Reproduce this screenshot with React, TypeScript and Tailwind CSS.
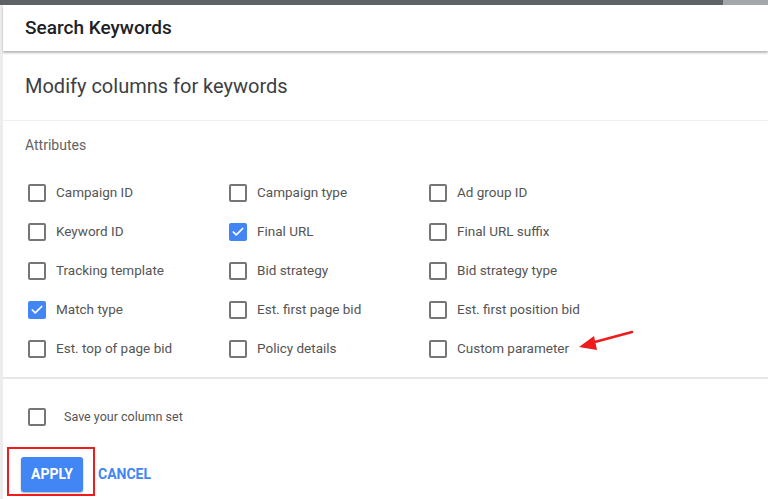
import { Check } from 'lucide-react';

type Attr = { label: string; checked?: boolean };

const attributes: Attr[] = [
  { label: 'Campaign ID' },
  { label: 'Campaign type' },
  { label: 'Ad group ID' },
  { label: 'Keyword ID' },
  { label: 'Final URL', checked: true },
  { label: 'Final URL suffix' },
  { label: 'Tracking template' },
  { label: 'Bid strategy' },
  { label: 'Bid strategy type' },
  { label: 'Match type', checked: true },
  { label: 'Est. first page bid' },
  { label: 'Est. first position bid' },
  { label: 'Est. top of page bid' },
  { label: 'Policy details' },
  { label: 'Custom parameter' },
];

function Box({ checked = false }: { checked?: boolean }) {
  return checked ? (
    <span className="flex h-[18px] w-[18px] flex-shrink-0 items-center justify-center rounded-[2px] bg-[#4285f4]">
      <Check size={14} strokeWidth={3} className="text-white" />
    </span>
  ) : (
    <span className="h-[18px] w-[18px] flex-shrink-0 rounded-[2px] border-2 border-[#767676]" />
  );
}

export default function App() {
  return (
    <div
      className="relative h-[499px] w-[768px] overflow-hidden bg-white"
      style={{ fontFamily: 'Roboto, "Liberation Sans", sans-serif' }}
    >
      {/* Top strip */}
      <div className="flex h-[5px]">
        <div className="flex-1 bg-[#5f6368]" />
        <div className="w-[45px] bg-[#a3a6aa]" />
      </div>

      <div className="flex h-[494px]">
        <div className="w-[3px] bg-[#ececec]" />

        <div className="flex flex-1 flex-col">
          {/* Header */}
          <div className="relative z-10 flex h-[46px] items-center pl-[22px] pt-[1px] text-[19px] font-medium text-[#202124] shadow-[0_2px_2px_rgba(0,0,0,0.28)]">
            Search Keywords
          </div>

          {/* Title */}
          <div className="flex h-[70px] items-center border-b border-[#efefef] pl-[22px] text-[20px] text-[#3c4043]">
            Modify columns for keywords
          </div>

          {/* Attributes */}
          <div className="border-b-2 border-[#e6e6e6] pb-[9px] pl-[25px]">
            <div className="-ml-[3px] h-[52px] pt-[14px] text-[14px] leading-[20px] text-[#5f6368]">Attributes</div>
            <div className="grid grid-cols-[201px_200px_1fr]">
              {attributes.map((a) => (
                <div key={a.label} className="flex h-[39px] items-center gap-[10px]">
                  <Box checked={a.checked} />
                  <span className="text-[13.5px] text-[#555555]">{a.label}</span>
                </div>
              ))}
            </div>
          </div>

          {/* Save set */}
          <div className="flex h-[76px] items-center gap-[18px] pl-[25px]">
            <Box />
            <span className="text-[12.5px] text-[#555555]">Save your column set</span>
          </div>

          {/* Actions */}
          <div className="flex items-center gap-[15px] pl-[18px] pt-[2px]">
            <button
              type="button"
              className="h-[35px] w-[62px] rounded-[3px] bg-[#4285f4] text-[14px] font-bold text-white shadow-[0_1px_2px_rgba(0,0,0,0.3)]"
            >
              APPLY
            </button>
            <button type="button" className="text-[14px] font-bold text-[#4285f4]">
              CANCEL
            </button>
          </div>
        </div>
      </div>

      {/* Annotation: red box */}
      <div className="absolute left-[7px] top-[447px] h-[49px] w-[88px] border-2 border-[#ee1c1c]" />

      {/* Annotation: red arrow */}
      <svg className="absolute left-[576px] top-[328px]" width="60" height="26" viewBox="0 0 60 26">
        <line x1="56" y1="4" x2="15" y2="15" stroke="#ee1c1c" strokeWidth="2.5" strokeLinecap="round" />
        <polygon points="3,19 18,8 21,22" fill="#ee1c1c" />
      </svg>
    </div>
  );
}
